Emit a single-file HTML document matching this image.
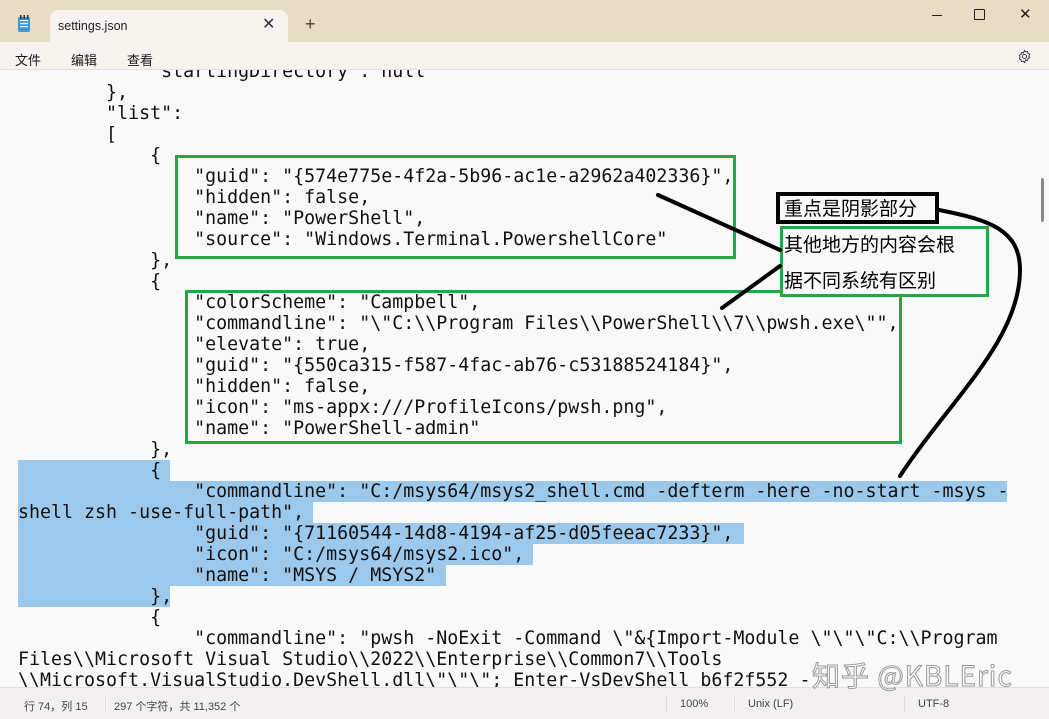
<!DOCTYPE html>
<html><head><meta charset="utf-8"><style>
*{margin:0;padding:0;box-sizing:border-box}
body{width:1049px;height:719px;overflow:hidden;background:#f9f9f9;position:relative;font-family:"Liberation Sans","Noto Sans CJK SC",sans-serif}
.title{position:absolute;left:0;top:0;width:1049px;height:42px;background:#e9dcc6;z-index:6}
.tab{position:absolute;left:50px;top:10px;width:238px;height:32px;background:#f7f3ee;border-radius:8px 8px 0 0}
.menu{position:absolute;left:0;top:42px;width:1049px;height:28px;background:#f7f3ee;border-bottom:1px solid #e2e0dc;z-index:6}
.menu span{position:absolute;top:8px;font-size:13px;color:#1a1a1a}
pre{position:absolute;left:18px;top:61px;font-family:"DejaVu Sans Mono",monospace;font-size:18.3px;line-height:21px;color:#111;z-index:2}
.sel{position:absolute;background:#9cc8ec;height:21px;z-index:1;left:18px}
.status{position:absolute;left:0;top:687px;width:1049px;height:32px;background:#f3f1ee;border-top:1px solid #e2e0dc;font-size:11px;color:#444;z-index:5}
.status span{position:absolute;top:10px}
.g{position:absolute;border:3px solid #22a845;z-index:3}
</style></head><body>
<div class="title">
<svg style="position:absolute;left:17px;top:15px" width="14" height="18"><rect x="1" y="2" width="12" height="15" rx="2" fill="#3a9ad9"/><rect x="3" y="5" width="8" height="1.2" fill="#fff"/><rect x="3" y="8" width="8" height="1.2" fill="#fff"/><rect x="3" y="11" width="8" height="1.2" fill="#fff"/><rect x="3" y="0" width="1.5" height="4" fill="#235"/><rect x="6.5" y="0" width="1.5" height="4" fill="#235"/><rect x="10" y="0" width="1.5" height="4" fill="#235"/></svg>
<div class="tab"><span style="position:absolute;left:8px;top:9px;font-size:12.5px;color:#222">settings.json</span>
<span style="position:absolute;left:212px;top:4px;font-size:16px;color:#333">✕</span></div>
<span style="position:absolute;left:305px;top:14px;font-size:18px;color:#444;font-weight:300">+</span>
<div style="position:absolute;left:932px;top:15px;width:10px;height:1px;background:#222"></div>
<div style="position:absolute;left:974px;top:9px;width:11px;height:11px;border:1px solid #222;border-radius:1px"></div>
<span style="position:absolute;left:1019px;top:5px;font-size:15px;color:#222">✕</span>
</div>
<div class="menu"><span style="left:15px">文件</span><span style="left:71px">编辑</span><span style="left:127px">查看</span>
<svg style="position:absolute;left:1017px;top:7px" width="15" height="15" viewBox="0 0 16 16"><circle cx="8" cy="8" r="2.2" fill="none" stroke="#333"/><path d="M8 1.5l1.2 1.6 2-.5.5 2 1.8.9-.8 1.9.8 1.9-1.8.9-.5 2-2-.5L8 14.5l-1.2-1.6-2 .5-.5-2-1.8-.9.8-1.9-.8-1.9 1.8-.9.5-2 2 .5z" fill="none" stroke="#333" stroke-width="1"/></svg></div>

<div class="sel" style="top:460px;width:152px"></div>
<div class="sel" style="top:481px;width:989px"></div>
<div class="sel" style="top:502px;width:295px"></div>
<div class="sel" style="top:523px;width:726px"></div>
<div class="sel" style="top:544px;width:515px"></div>
<div class="sel" style="top:565px;width:428px"></div>
<div class="sel" style="top:586px;width:152px"></div>
<pre>            "startingDirectory": null
        },
        "list":
        [
            {
                "guid": "{574e775e-4f2a-5b96-ac1e-a2962a402336}",
                "hidden": false,
                "name": "PowerShell",
                "source": "Windows.Terminal.PowershellCore"
            },
            {
                "colorScheme": "Campbell",
                "commandline": "\"C:\\Program Files\\PowerShell\\7\\pwsh.exe\"",
                "elevate": true,
                "guid": "{550ca315-f587-4fac-ab76-c53188524184}",
                "hidden": false,
                "icon": "ms-appx:///ProfileIcons/pwsh.png",
                "name": "PowerShell-admin"
            },
            {
                "commandline": "C:/msys64/msys2_shell.cmd -defterm -here -no-start -msys -
shell zsh -use-full-path",
                "guid": "{71160544-14d8-4194-af25-d05feeac7233}",
                "icon": "C:/msys64/msys2.ico",
                "name": "MSYS / MSYS2"
            },
            {
                "commandline": "pwsh -NoExit -Command \"&amp;{Import-Module \"\"\"C:\\Program
Files\\Microsoft Visual Studio\\2022\\Enterprise\\Common7\\Tools
\\Microsoft.VisualStudio.DevShell.dll\"\"\"; Enter-VsDevShell b6f2f552 -</pre>
<div style="position:absolute;left:1041px;top:178px;width:3px;height:44px;background:#8a8a8a;border-radius:2px"></div>

<div class="g" style="left:175px;top:155px;width:561px;height:104px"></div>
<div class="g" style="left:185px;top:290px;width:717px;height:154px"></div>
<div class="g" style="left:780px;top:226px;width:209px;height:71px;background:#f9f9f9;z-index:4"></div>
<div style="position:absolute;left:776px;top:192px;width:163px;height:32px;border:4px solid #000;background:#f9f9f9;z-index:4"></div>
<div style="position:absolute;left:784px;top:195px;font-size:19px;color:#000;z-index:5;font-family:'Noto Sans CJK SC',sans-serif;line-height:26px;white-space:nowrap">重点是阴影部分</div>
<div style="position:absolute;left:784px;top:226px;font-size:19px;color:#000;z-index:5;font-family:'Noto Sans CJK SC',sans-serif;line-height:36px;width:205px;white-space:nowrap">其他地方的内容会根<br>据不同系统有区别</div>
<svg style="position:absolute;left:0;top:0;z-index:4" width="1049" height="719"><g stroke="#000" stroke-width="4" fill="none" stroke-linecap="round"><path d="M658 195L780 250"/><path d="M722 308L780 266"/><path d="M939 210C990 220 1020 230 1020 270C1020 340 950 400 900 476"/></g></svg>

<div style="position:absolute;left:812px;top:655px;font-size:28px;color:rgba(255,255,255,.85);-webkit-text-stroke:1px #999;z-index:6;font-family:'Noto Sans CJK SC',sans-serif;letter-spacing:1px">知乎 @KBLEric</div>
<div class="status"><span style="left:24px">行 74，列 15</span><span style="left:114px">297 个字符，共 11,352 个</span>
<span style="left:680px">100%</span><span style="left:748px">Unix (LF)</span><span style="left:918px">UTF-8</span>
<div style="position:absolute;left:105px;top:8px;width:1px;height:16px;background:#ddd"></div>
<div style="position:absolute;left:666px;top:8px;width:1px;height:16px;background:#ddd"></div>
<div style="position:absolute;left:734px;top:8px;width:1px;height:16px;background:#ddd"></div>
<div style="position:absolute;left:904px;top:8px;width:1px;height:16px;background:#ddd"></div></div>
</body></html>
